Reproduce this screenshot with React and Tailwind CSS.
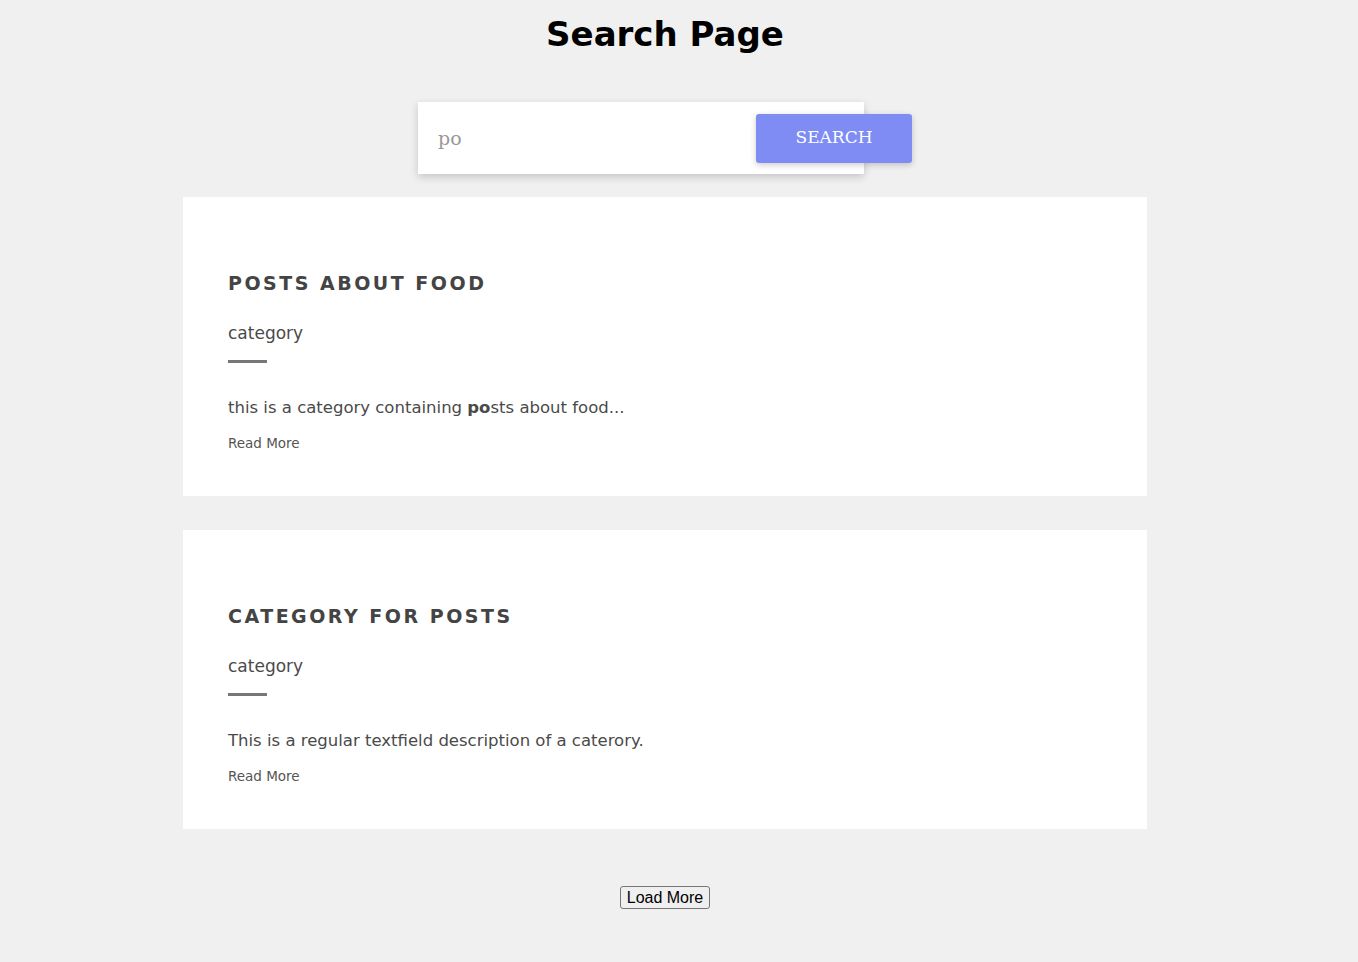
import { useState } from "react";

const CATEGORIES = [
  {
    title: "POSTS ABOUT FOOD",
    type: "category",
    desc: (
      <>
        this is a category containing <b className="font-bold">po</b>sts about food...
      </>
    ),
  },
  {
    title: "CATEGORY FOR POSTS",
    type: "category",
    desc: "This is a regular textfield description of a caterory.",
  },
];

const sans = "font-['DejaVu_Sans','Noto_Sans',sans-serif]";

function ResultCard({ item }) {
  return (
    <div className={`w-[964px] bg-white pl-[45px] pt-[72px] pb-[43px] text-[#4a4a4a] ${sans}`}>
      <h2 className="h-[28px] text-[19px] font-bold leading-[28px] tracking-[2.5px] text-[#444]">
        {item.title}
      </h2>
      <p className="mt-[24px] h-[24px] text-[17px] leading-[24px]">{item.type}</p>
      <div className="mt-[15px] h-[3px] w-[39px] bg-[#777]"></div>
      <p className="mt-[32px] h-[26px] text-[16.5px] leading-[26px]">{item.desc}</p>
      <a href="#" className="mt-[12px] block h-[20px] text-[13.5px] leading-[20px] text-[#555]">
        Read More
      </a>
    </div>
  );
}

export default function App() {
  const [query, setQuery] = useState("po");

  return (
    <div className="min-h-screen bg-[#f0f0f0]">
      <div className="flex w-[1330px] flex-col items-center pb-[53px]">
        <h1 className={`mt-[12px] h-[44px] text-[34px] font-bold leading-[44px] text-black ${sans}`}>
          Search Page
        </h1>

        <form className="mt-[46px] flex items-center" onSubmit={(e) => e.preventDefault()}>
          <div className="h-[72px] w-[446px] bg-white shadow-[0_3px_8px_rgba(0,0,0,0.18)]">
            <input
              value={query}
              onChange={(e) => setQuery(e.target.value)}
              className="h-full w-full bg-transparent pl-[20px] font-['DejaVu_Serif',serif] text-[19px] text-[#999] outline-none"
            />
          </div>
          <button
            type="submit"
            className="-ml-[108px] h-[49px] w-[156px] rounded-[3px] bg-[#7e8cf4] font-['DejaVu_Serif',serif] text-[17px] text-white shadow-[0_2px_6px_rgba(0,0,0,0.2)]"
          >
            SEARCH
          </button>
        </form>

        <div className="mt-[23px] flex flex-col gap-[34px]">
          {CATEGORIES.map((c) => (
            <ResultCard key={c.title} item={c} />
          ))}
        </div>

        <button className="mt-[57px] rounded-[3px] border border-[#767676] bg-[#efefef] px-[6px] py-[1px] font-['Liberation_Sans',Arial,sans-serif] text-[16px] leading-[19px] text-black">
          Load More
        </button>
      </div>
    </div>
  );
}
